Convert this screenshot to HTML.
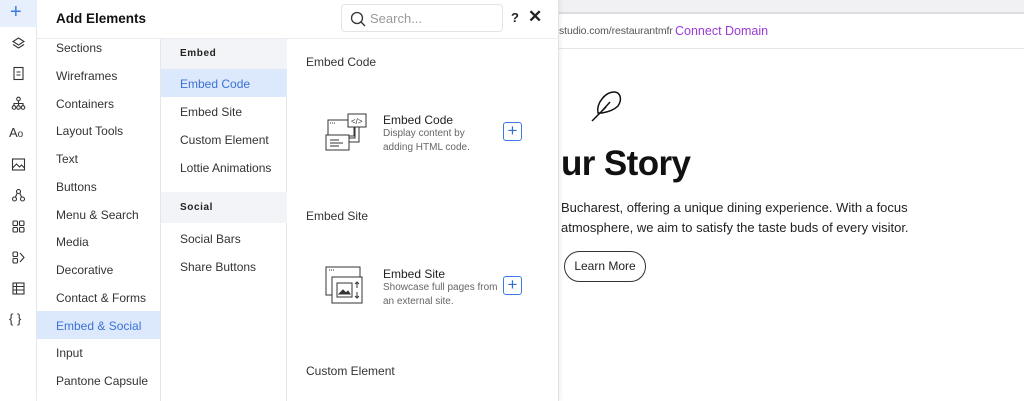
<!DOCTYPE html>
<html><head><style>
*{margin:0;padding:0;box-sizing:border-box}
body{width:1024px;height:401px;overflow:hidden;background:#fff;font-family:"Liberation Sans",sans-serif;position:relative;color:#222}
.abs{position:absolute}
.topgray{left:559px;top:0;width:465px;height:14px;background:#f1f1f3;border-bottom:2px solid #dcdde3}
.urlbar{left:559px;top:14px;width:465px;height:35px;border-bottom:1px solid #e6e6ea;font-size:12px;color:#555;padding:10px 0 0 0}
.side{left:0;top:0;width:37px;height:401px;background:#fff;border-right:1px solid #e8e8ec}
.side .ic{position:absolute;left:11px;width:15px;height:15px}
.panel{left:37px;top:0;width:522px;height:401px;background:#fff;border-right:1px solid #e2e2e6;box-shadow:2px 0 4px rgba(0,0,0,.06)}
.hdr{position:absolute;left:0;top:0;width:522px;height:39px;border-bottom:1px solid #ececf0}
.col1 div{position:absolute;left:19px;font-size:12px;color:#333}
.col2{position:absolute;left:123px;top:39px;width:127px;height:362px;border-left:1px solid #e6e6ea;border-right:1px solid #e6e6ea}
.col2 .it{position:absolute;left:19px;font-size:12px;color:#333}
.gh{position:absolute;left:0;width:126px;background:#f3f4f7;font-size:10px;font-weight:bold;letter-spacing:.6px;padding-left:19px;color:#222}
.sec{position:absolute;left:269px;font-size:12px;color:#333}
.card h4{position:absolute;font-size:12px;font-weight:normal;color:#222}
.card p{position:absolute;font-size:10px;color:#666;line-height:14px}
.plus{position:absolute;width:19px;height:19px;border:1px solid #3b7be0;border-radius:3px;color:#2f6fd8;font-size:17px;line-height:16px;text-align:center}
</style></head><body>
<div class="abs topgray"></div>
<div class="abs urlbar"><span style="position:absolute;left:0;top:11px;font-size:10.5px;letter-spacing:-.1px">studio.com/restaurantmfr</span><span style="position:absolute;left:116px;top:10px;color:#9b3bd6;font-size:12.5px">Connect Domain</span></div>
<svg class="abs" style="left:588px;top:88px" width="36" height="36" viewBox="0 0 36 36" fill="none" stroke="#111" stroke-width="1.5"><path d="M4 33 L18 19 M10 25 C8 15 18 3 27 4 C33 5 34 12 30 18 C26 22 20 24 14 25 Z M13 24 L22 14"/></svg>
<div class="abs" style="left:561px;top:144px;font-size:35px;font-weight:bold;color:#111;letter-spacing:-.6px">ur Story</div>
<div class="abs" style="left:561px;top:198px;font-size:13px;color:#222;line-height:20px">Bucharest, offering a unique dining experience. With a focus<br>atmosphere, we aim to satisfy the taste buds of every visitor.</div>
<div class="abs" style="left:564px;top:251px;width:82px;height:31px;border:1px solid #333;border-radius:16px;font-size:12px;text-align:center;line-height:29px;color:#222">Learn More</div>

<div class="abs side">
<div style="position:absolute;left:0;top:0;width:37px;height:27px;background:#e7effd"></div>
<div style="position:absolute;left:10px;top:1px;color:#3b7be0;font-size:20px;line-height:22px">+</div>
<svg class="ic" style="top:36px" viewBox="0 0 15 15" fill="none" stroke="#333" stroke-width="1.1"><path d="M7.5 2 L13 5.5 L7.5 9 L2 5.5Z M2 8.5 L7.5 12 L13 8.5"/></svg>
<svg class="ic" style="top:66px" viewBox="0 0 15 15" fill="none" stroke="#333" stroke-width="1.1"><rect x="3" y="1.5" width="9" height="12"/><path d="M5.5 6h4M5.5 9h4"/></svg>
<svg class="ic" style="top:96px" viewBox="0 0 15 15" fill="none" stroke="#333" stroke-width="1.1"><circle cx="7.5" cy="3" r="1.8"/><circle cx="3" cy="11.5" r="1.8"/><circle cx="7.5" cy="11.5" r="1.8"/><circle cx="12" cy="11.5" r="1.8"/><path d="M7.5 5v4.5M3 9.5 V7.5h9v2"/></svg>
<div style="position:absolute;left:9px;top:125px;font-size:13px;color:#333">A<span style="font-size:10px">o</span></div>
<svg class="ic" style="top:157px" viewBox="0 0 15 15" fill="none" stroke="#333" stroke-width="1.1"><rect x="1.5" y="2" width="12" height="11"/><path d="M1.5 11l4-4 3 3 2-2 3 3"/></svg>
<svg class="ic" style="top:188px" viewBox="0 0 15 15" fill="none" stroke="#333" stroke-width="1.1"><circle cx="7.5" cy="3.5" r="2"/><circle cx="3.5" cy="11" r="2"/><circle cx="11.5" cy="11" r="2"/><path d="M6 5.5l-1.5 3.5M9 5.5l1.5 3.5"/></svg>
<svg class="ic" style="top:219px" viewBox="0 0 15 15" fill="none" stroke="#333" stroke-width="1.1"><rect x="2" y="2" width="4.5" height="4.5" rx="1"/><rect x="8.5" y="2" width="4.5" height="4.5" rx="1"/><rect x="2" y="8.5" width="4.5" height="4.5" rx="1"/><rect x="8.5" y="8.5" width="4.5" height="4.5" rx="1"/></svg>
<svg class="ic" style="top:250px" viewBox="0 0 15 15" fill="none" stroke="#333" stroke-width="1.1"><rect x="2" y="2" width="4.5" height="4.5" rx="1"/><rect x="2" y="8.5" width="4.5" height="4.5" rx="1"/><path d="M9 3l4 4.5-4 4.5"/></svg>
<svg class="ic" style="top:281px" viewBox="0 0 15 15" fill="none" stroke="#333" stroke-width="1.1"><rect x="2" y="2" width="11" height="11"/><path d="M2 5.5h11M2 9h11M5.5 2v11"/></svg>
<div style="position:absolute;left:9px;top:311px;font-size:13px;color:#333">{ }</div>
</div>

<div class="abs panel">
<div class="hdr">
<div style="position:absolute;left:19px;top:11px;font-size:13.5px;font-weight:bold;color:#111">Add Elements</div>
<div style="position:absolute;left:304px;top:4px;width:162px;height:28px;border:1px solid #e3e3e8;border-radius:4px">
<svg style="position:absolute;left:8px;top:6px" width="16" height="16" viewBox="0 0 16 16" fill="none" stroke="#333" stroke-width="1.3"><circle cx="7" cy="7" r="5.5"/><path d="M11 11l4 4"/></svg>
<span style="position:absolute;left:28px;top:6px;font-size:13px;color:#999">Search...</span></div>
<div style="position:absolute;left:474px;top:10px;font-size:13px;font-weight:bold">?</div>
<div style="position:absolute;left:491px;top:7px;font-size:17px;font-weight:bold">✕</div>
</div>
<div class="col1">
<div style="top:41px">Sections</div>
<div style="top:69px">Wireframes</div>
<div style="top:97px">Containers</div>
<div style="top:124px">Layout Tools</div>
<div style="top:152px">Text</div>
<div style="top:180px">Buttons</div>
<div style="top:208px">Menu &amp; Search</div>
<div style="top:235px">Media</div>
<div style="top:263px">Decorative</div>
<div style="top:291px">Contact &amp; Forms</div>
<div style="top:311px;left:0;width:123px;height:28px;background:#dce8fb"></div>
<div style="top:319px;color:#3b72d6">Embed &amp; Social</div>
<div style="top:346px">Input</div>
<div style="top:374px">Pantone Capsule</div>
</div>
<div class="col2">
<div class="gh" style="top:0;height:30px;line-height:30px">Embed</div>
<div style="position:absolute;left:0;top:30px;width:126px;height:28px;background:#dce8fb"></div>
<div class="it" style="top:38px;color:#3b72d6">Embed Code</div>
<div class="it" style="top:66px">Embed Site</div>
<div class="it" style="top:94px">Custom Element</div>
<div class="it" style="top:122px">Lottie Animations</div>
<div class="gh" style="top:153px;height:31px;line-height:31px">Social</div>
<div class="it" style="top:193px">Social Bars</div>
<div class="it" style="top:221px">Share Buttons</div>
</div>
<div class="sec" style="top:55px">Embed Code</div>
<div class="sec" style="top:209px">Embed Site</div>
<div class="sec" style="top:364px">Custom Element</div>
<div class="card">
<svg style="position:absolute;left:287px;top:112px" width="46" height="42" viewBox="0 0 46 42" fill="none" stroke="#333" stroke-width="1"><rect x="4" y="8" width="26" height="16"/><path d="M6 11h5" stroke-dasharray="1 1"/><rect x="24" y="2" width="18" height="13" fill="#fff"/><text x="27" y="12" font-size="8" fill="#333" stroke="none" font-family="Liberation Sans">&lt;/&gt;</text><rect x="2" y="23" width="23" height="15" fill="#fff"/><path d="M6 28h9M6 31h13M6 34h9"/><path d="M25 30h10v-15M25 26h6v-11"/></svg>
<h4 style="left:346px;top:113px">Embed Code</h4>
<p style="left:346px;top:127px">Display content by<br>adding HTML code.</p>
<div class="plus" style="left:466px;top:122px">+</div>
<svg style="position:absolute;left:287px;top:265px" width="46" height="42" viewBox="0 0 46 42" fill="none" stroke="#333" stroke-width="1"><rect x="2" y="2" width="34" height="28"/><path d="M5 5h5" stroke-dasharray="1 1"/><rect x="8" y="12" width="30" height="26" fill="#fff"/><rect x="13" y="18" width="15" height="14"/><path d="M15 29l4-4 3 3 2-2 2 3z" fill="#333"/><path d="M33 17v6M31 19l2-2 2 2M33 27v6M31 31l2 2 2-2"/></svg>
<h4 style="left:346px;top:267px">Embed Site</h4>
<p style="left:346px;top:281px">Showcase full pages from<br>an external site.</p>
<div class="plus" style="left:466px;top:276px">+</div>
</div>
</div>
</body></html>
